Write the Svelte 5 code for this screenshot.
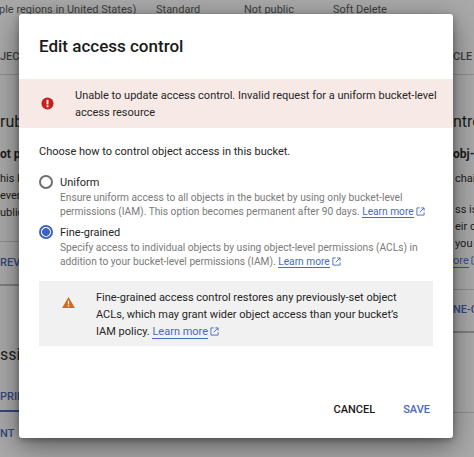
<script>
  const options = [
    {
      id: 'uniform',
      label: 'Uniform',
      lines: 'Ensure uniform access to all objects in the bucket by using only bucket-level permissions (IAM). This option becomes permanent after 90 days.',
      checked: false
    },
    {
      id: 'fine',
      label: 'Fine-grained',
      lines: 'Specify access to individual objects by using object-level permissions (ACLs) in addition to your bucket-level permissions (IAM).',
      checked: true
    }
  ]
</script>

{#snippet ext_icon()}
  <svg class="ext" viewBox="0 0 12 12" width="9" height="9" aria-hidden="true">
    <path d="M5 1.2H1.2v9.6h9.6V7" fill="none" stroke="currentColor" stroke-width="1.2" />
    <path d="M7 1.2h3.8V5M10.6 1.4 5 7" fill="none" stroke="currentColor" stroke-width="1.2" />
  </svg>
{/snippet}

{#snippet learn_more()}
  <span class="learn"><span class="learn-text">Learn more</span>{@render ext_icon()}</span>
{/snippet}

<div class="page">
  <div class="bg-top">
    <span class="regions">ple regions in United States)</span>
    <span class="storage">Standard</span>
    <span class="public">Not public</span>
    <span>Soft Delete</span>
  </div>

  <div class="bg-cols">
    <div class="bg-col left">
      <div class="tab">JECTS</div>
      <div class="heading">rubric</div>
      <div class="strong">ot public</div>
      <div class="small first">his bucket</div>
      <div class="small">everyone</div>
      <div class="small">ublic</div>
      <div class="action">REVIEW</div>
      <div class="heading second">ssions</div>
      <div class="tab-active"><span>PRINCIPALS</span></div>
      <div class="action last">NT</div>
    </div>
    <div class="bg-col right">
      <div class="tab">CLE</div>
      <div class="heading">ntrol</div>
      <div class="strong">obj-level</div>
      <div class="small first">chain</div>
      <div class="small gap">ss is</div>
      <div class="small">eir c</div>
      <div class="small">you</div>
      <div class="small more"><span class="learn-text">ore</span>{@render ext_icon()}</div>
      <div class="action">NE-CLICK</div>
      <div class="spacer"></div>
    </div>
  </div>

  <div class="dialog">
    <h1>Edit access control</h1>

    <div class="banner">
      <svg class="banner-icon" viewBox="0 0 14 14" width="13" height="13" aria-hidden="true">
        <circle cx="7" cy="7" r="6.5" fill="#c5221f" />
        <rect x="6" y="3" width="2" height="5" fill="#fff" />
        <rect x="6" y="9" width="2" height="2" fill="#fff" />
      </svg>
      <p>Unable to update access control. Invalid request for a uniform bucket-level access resource</p>
    </div>

    <p class="intro">Choose how to control object access in this bucket.</p>

    {#each options as opt}
      <div class="option">
        <span class="radio" class:checked={opt.checked}></span>
        <div class="option-body">
          <div class="option-label">{opt.label}</div>
          <p class="option-desc">{opt.lines} {@render learn_more()}</p>
        </div>
      </div>
    {/each}

    <div class="notice">
      <svg class="notice-icon" viewBox="0 0 14 12" width="13" height="11" aria-hidden="true">
        <path d="M7 0 14 12H0Z" fill="#d2691e" />
        <rect x="6.3" y="4" width="1.4" height="4" fill="#fff" />
        <rect x="6.3" y="9" width="1.4" height="1.4" fill="#fff" />
      </svg>
      <p>Fine-grained access control restores any previously-set object ACLs, which may grant wider object access than your bucket’s IAM policy. {@render learn_more()}</p>
    </div>

    <div class="buttons">
      <span class="btn cancel">CANCEL</span>
      <span class="btn save">SAVE</span>
    </div>
  </div>
</div>

<style>
  :global(body) {
    margin: 0;
  }

  .page {
    position: relative;
    width: 474px;
    height: 457px;
    overflow: hidden;
    background: #a9a9a9;
    font-family: Roboto, "Liberation Sans", sans-serif;
    color: #1c1c1c;
  }

  .bg-top {
    display: flex;
    height: 20px;
    padding-top: 2px;
    box-sizing: border-box;
    font-size: 11px;
    line-height: 16px;
    color: #3e3e3e;
    white-space: nowrap;
    margin-left: -1px;
  }

  .regions {
    width: 157px;
  }

  .storage {
    width: 88px;
  }

  .public {
    width: 89px;
  }

  .bg-cols {
    display: flex;
    justify-content: space-between;
  }

  .bg-col {
    white-space: nowrap;
    overflow: hidden;
  }

  .bg-col.left {
    width: 40px;
  }

  .bg-col.right {
    width: 21px;
  }

  .tab {
    margin-top: 29px;
    height: 25px;
    line-height: 16px;
    font-size: 11px;
    font-weight: 500;
    color: #3e3e3e;
    border-bottom: 1px solid #8e8e8e;
  }

  .heading {
    margin-top: 36px;
    height: 22px;
    line-height: 22px;
    font-size: 16px;
  }

  .strong {
    margin-top: 13px;
    height: 16px;
    line-height: 16px;
    font-size: 12px;
    font-weight: 700;
  }

  .small {
    height: 17px;
    line-height: 17px;
    font-size: 11px;
  }

  .small.first {
    margin-top: 8px;
  }

  .small.gap {
    margin-top: 14px;
  }

  .right .small:not(.more) {
    padding-left: 2px;
  }

  .more {
    color: #3a4f8c;
  }

  .action {
    font-size: 11px;
    font-weight: 500;
    color: #33477f;
    line-height: 16px;
  }

  .left .action {
    margin-top: 20px;
    padding-bottom: 13px;
    border-top: 1px solid #8e8e8e;
    padding-top: 13px;
    border-bottom: 2px solid #7e7e7e;
  }

  .left .heading.second {
    margin-top: 58px;
  }

  .right .action {
    margin-top: 20px;
    padding-top: 12px;
    padding-bottom: 13px;
    border-top: 1px solid #8e8e8e;
    border-bottom: 2px solid #7e7e7e;
  }

  .tab-active {
    margin-top: 23px;
    height: 21px;
    line-height: 16px;
    font-size: 11px;
    font-weight: 500;
    color: #33477f;
    border-bottom: 2px solid #33477f;
  }

  .left .action.last {
    margin-top: 0;
    padding: 14px 0 0;
    border: 0;
  }

  .spacer {
    height: 79px;
    border-bottom: 1px solid #8e8e8e;
  }

  .dialog {
    position: absolute;
    left: 19px;
    top: 14px;
    width: 434px;
    height: 424px;
    box-sizing: border-box;
    display: flex;
    flex-direction: column;
    background: #fff;
    border-radius: 3px;
    box-shadow: 0 8px 28px rgba(0, 0, 0, 0.45), 0 2px 6px rgba(0, 0, 0, 0.3);
  }

  h1 {
    margin: 20px 20px 0;
    height: 25px;
    font-size: 17px;
    line-height: 25px;
    font-weight: 500;
    color: #1a1a1a;
  }

  p {
    margin: 0;
  }

  .banner {
    display: flex;
    align-items: center;
    height: 49px;
    margin-top: 20px;
    padding-left: 22px;
    background: #f7e9e6;
    font-size: 11px;
    line-height: 17px;
    color: #262626;
  }

  .banner-icon {
    flex: none;
    margin-right: 21px;
  }

  .banner p {
    width: 370px;
  }

  .intro {
    margin: 15px 20px 0;
    font-size: 11px;
    line-height: 17px;
    color: #262626;
  }

  .option {
    display: flex;
    margin: 0 20px;
    gap: 7px;
  }

  .intro + .option {
    margin-top: 14px;
  }

  .option + .option {
    margin-top: 5px;
  }

  .radio {
    flex: none;
    box-sizing: border-box;
    width: 14px;
    height: 14px;
    margin-top: 1px;
    border: 2px solid #6e6e6e;
    border-radius: 50%;
  }

  .radio.checked {
    border-color: #3c62c4;
    background: radial-gradient(circle, #3c62c4 0 3.6px, #fff 4.2px);
  }

  .option-body {
    min-width: 0;
  }

  .option-label {
    font-size: 11px;
    line-height: 17px;
    color: #262626;
  }

  .option-desc {
    font-size: 10.2px;
    line-height: 14px;
    color: #7a7a7a;
  }

  .learn {
    color: #4a69bd;
    white-space: nowrap;
  }

  .learn-text {
    border-bottom: 1px solid currentColor;
  }

  .ext {
    margin-left: 2px;
    vertical-align: -1px;
  }

  .notice {
    display: flex;
    align-items: flex-start;
    height: 65px;
    box-sizing: border-box;
    margin: 12px 20px 0;
    padding: 8px 0 0 23px;
    background: #f1f1f1;
    font-size: 11px;
    line-height: 17px;
    color: #262626;
  }

  .notice-icon {
    flex: none;
    margin: 8px 21px 0 0;
  }

  .notice p {
    width: 315px;
  }

  .buttons {
    display: flex;
    justify-content: flex-end;
    gap: 28px;
    margin-top: auto;
    padding: 0 23px 20px 0;
    font-size: 11px;
    line-height: 16px;
    font-weight: 500;
  }

  .cancel {
    color: #1a1a1a;
  }

  .save {
    color: #4a69bd;
  }
</style>
